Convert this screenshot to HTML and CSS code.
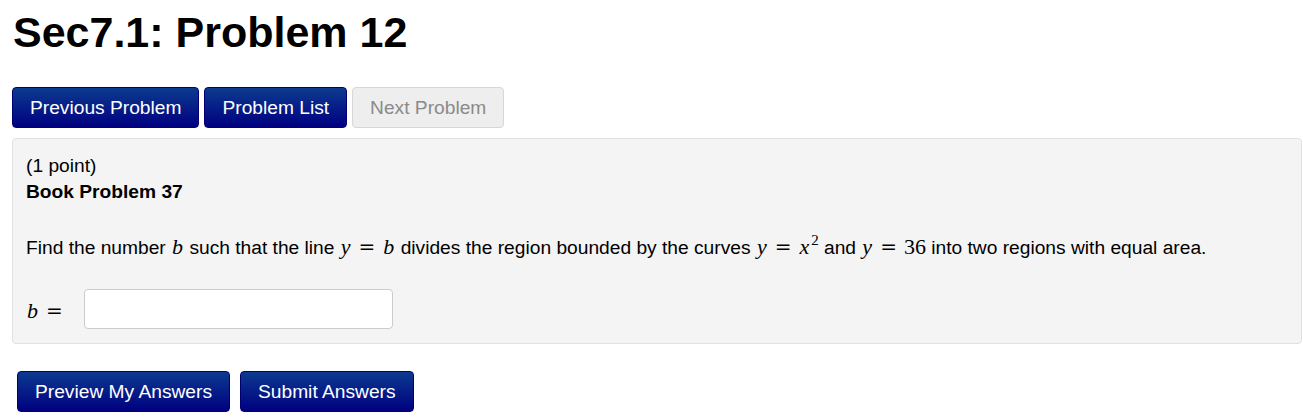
FILE: index.html
```html
<!DOCTYPE html>
<html>
<head>
<meta charset="utf-8">
<title>Sec7.1: Problem 12</title>
<link rel="stylesheet" href="styles.css">
</head>
<body>
<div class="page">
  <h1 class="title">Sec7.1: Problem 12</h1>
  <div class="nav">
    <button class="btn">Previous Problem</button>
    <button class="btn">Problem List</button>
    <button class="btn btn-disabled" disabled>Next Problem</button>
  </div>
  <div class="problem">
    <div class="line">(1 point)</div>
    <div class="line bold">Book Problem 37</div>
    <p class="statement">Find the number <span class="mi">b</span> such that the line <span class="math"><span class="mi">y</span><span class="mo">=</span><span class="mi">b</span></span> divides the region bounded by the curves <span class="math"><span class="mi">y</span><span class="mo">=</span><span class="mi">x</span><sup class="sup">2</sup></span> and <span class="math"><span class="mi">y</span><span class="mo">=</span><span class="mn">36</span></span> into two regions with equal area.</p>
    <div class="answer">
      <span class="label"><span class="mi">b</span><span class="mo mo-end">=</span></span>
      <input class="field" type="text">
    </div>
  </div>
  <div class="actions">
    <button class="btn">Preview My Answers</button>
    <button class="btn">Submit Answers</button>
  </div>
</div>
</body>
</html>
```

FILE: styles.css
```css
html, body {
  margin: 0;
  padding: 0;
  background: #ffffff;
}

body {
  font-family: "Liberation Sans", Arial, sans-serif;
  color: #000000;
  font-size: 19.2px;
}

.page {
  padding: 0 1px 0 12px;
}

.title {
  margin: 9px 0 0 1px;
  font-size: 43px;
  line-height: 47px;
  font-weight: bold;
  color: #000;
}

.nav {
  display: flex;
  gap: 5px;
  margin-top: 31px;
}

.btn {
  font-family: "Liberation Sans", Arial, sans-serif;
  font-size: 19.2px;
  line-height: 23px;
  height: 41px;
  padding: 8px 17px;
  border: 1px solid #00006e;
  border-radius: 4px;
  color: #ffffff;
  background: linear-gradient(to bottom, #0c3a8f 0%, #000080 100%);
  cursor: pointer;
  box-sizing: border-box;
}

.btn-disabled {
  background: #eeeeee;
  border-color: #d7d7d7;
  color: #8a8a8a;
  cursor: default;
}

.problem {
  margin-top: 10px;
  background: #f4f4f4;
  border: 1px solid #e1e1e1;
  border-radius: 4px;
  padding: 14px 13px 14px 13px;
}

.line {
  line-height: 26px;
}

.bold {
  font-weight: bold;
}

.statement {
  margin: 29px 0 0 0;
  line-height: 26px;
}

.math {
  white-space: nowrap;
}

.mi {
  font-family: "Liberation Serif", "Times New Roman", serif;
  font-style: italic;
  font-size: 22px;
  padding: 0 1px;
}

.mn {
  font-family: "Liberation Serif", "Times New Roman", serif;
  font-size: 22px;
}

.mo {
  font-family: "DejaVu Serif", serif;
  font-size: 20px;
  margin: 0 7px;
}

.sup {
  font-family: "Liberation Serif", "Times New Roman", serif;
  font-size: 15px;
  line-height: 0;
  vertical-align: 0.6em;
  margin-left: 1px;
}

.answer {
  display: flex;
  align-items: center;
  margin-top: 28px;
}

.label {
  width: 58px;
  line-height: 26px;
  position: relative;
  top: 2px;
}

.mo-end {
  margin-right: 0;
}

.field {
  width: 309px;
  height: 40px;
  box-sizing: border-box;
  border: 1px solid #cccccc;
  border-radius: 4px;
  background: #ffffff;
  padding: 4px 8px;
  font-size: 19.2px;
  margin: 0;
}

.actions {
  display: flex;
  gap: 10px;
  margin: 27px 0 0 5px;
}
```
